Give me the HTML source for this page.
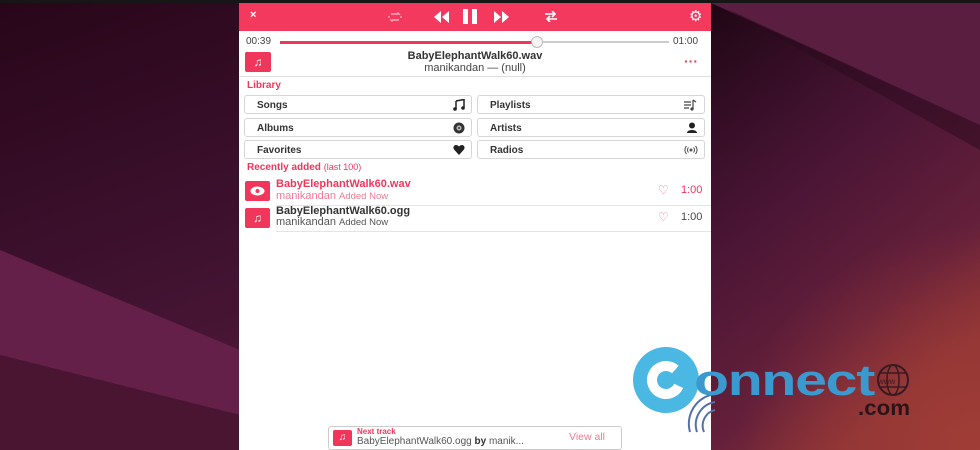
<!DOCTYPE html>
<html><head><meta charset="utf-8"><style>
*{margin:0;padding:0;box-sizing:border-box}
body{width:980px;height:450px;overflow:hidden;position:relative;font-family:"Liberation Sans",sans-serif;background:#3a1028}
.abs{position:absolute}
.bg{left:0;top:0;width:980px;height:450px;background:linear-gradient(160deg,#280619 0%,#3f1230 40%,#551a3a 70%,#5a1c3c 100%)}
.btn{position:absolute;height:19px;border:1px solid #d6d6d6;border-radius:3px;background:#fff;font-size:10px;font-weight:bold;color:#333;padding:4px 0 0 12px}
.btn svg{position:absolute;right:6px;top:3px}
.red{color:#f0365a}
</style></head><body>
<div class="abs bg"></div>
<svg class="abs" style="left:0;top:0" width="980" height="450">
<defs>
<linearGradient id="rg" x1="0" y1="0" x2="0.5" y2="1"><stop offset="0" stop-color="#1e0614"/><stop offset="0.45" stop-color="#4a1535"/><stop offset="0.8" stop-color="#65203a"/><stop offset="1" stop-color="#8a3236"/></linearGradient>
<radialGradient id="rr" cx="1" cy="1" r="0.9"><stop offset="0" stop-color="#a33e36" stop-opacity="0.9"/><stop offset="1" stop-color="#a33e36" stop-opacity="0"/></radialGradient>
</defs>
<polygon points="0,250 240,350 240,415 0,355" fill="#65204a"/>
<polygon points="0,355 240,415 240,450 0,450" fill="#4a1530"/>
<polygon points="711,0 980,0 980,450 711,450" fill="url(#rg)"/>
<rect x="711" y="200" width="269" height="250" fill="url(#rr)"/>
<polygon points="711,3 980,3 980,125" fill="#5a1f40"/>
<polygon points="725,8 980,125 980,150" fill="#2a0a1c" opacity="0.5"/>
<rect x="0" y="0" width="980" height="3" fill="#161616"/>
</svg>

<div class="abs" style="left:239px;top:3px;width:472px;height:447px;background:#fff">
 <div class="abs" style="left:0;top:0;width:472px;height:28px;background:#f33a5e;color:#fff">
  <div class="abs" style="left:11px;top:6px;font-size:11px;font-weight:bold">×</div>
  <svg class="abs" style="left:149px;top:9px" width="14" height="10"><path d="M3 2h8l-1.5-1.5M11 8H3l1.5 1.5M1 4v2M13 4v2" stroke="#f8a8b8" stroke-width="1.4" fill="none"/></svg>
  <svg class="abs" style="left:194px;top:8px" width="16" height="12"><path d="M8 0v12L1 6zM16 0v12L9 6z" fill="#fff"/></svg>
  <svg class="abs" style="left:224px;top:6px" width="16" height="16"><rect x="0" y="0" width="5" height="15" fill="#fff"/><rect x="9" y="0" width="5" height="15" fill="#fff"/></svg>
  <svg class="abs" style="left:255px;top:8px" width="16" height="12"><path d="M0 0v12l7-6zM8 0v12l7-6z" fill="#fff"/></svg>
  <svg class="abs" style="left:306px;top:8px" width="12" height="11"><path d="M0 3h10M7 0l3 3-3 3M12 8H2M5 5l-3 3 3 3" stroke="#fff" stroke-width="1.6" fill="none"/></svg>
  <div class="abs" style="left:450px;top:4px;font-size:15px">⚙</div>
 </div>
 <div class="abs" style="left:7px;top:33px;font-size:10px;color:#444">00:39</div>
 <div class="abs" style="left:41px;top:38px;width:389px;height:2px;background:#ccc"></div>
 <div class="abs" style="left:41px;top:38px;width:257px;height:3px;background:#f0365a"></div>
 <div class="abs" style="left:292px;top:33px;width:12px;height:12px;border-radius:50%;background:#f4f4f4;border:1px solid #bbb"></div>
 <div class="abs" style="left:434px;top:33px;font-size:10px;color:#444">01:00</div>
 <div class="abs" style="left:6px;top:49px;width:26px;height:20px;background:#f0365a;border-radius:2px;color:#fff;font-size:12px;text-align:center;line-height:20px">♫</div>
 <div class="abs" style="left:0;top:47px;width:472px;text-align:center;font-size:11px;font-weight:bold;color:#333">BabyElephantWalk60.wav</div>
 <div class="abs" style="left:0;top:59px;width:472px;text-align:center;font-size:11px;color:#444">manikandan — (null)</div>
 <div class="abs red" style="left:445px;top:50px;font-size:14px;font-weight:bold">···</div>
 <div class="abs" style="left:0;top:73px;width:472px;height:1px;background:#e0e0e0"></div>
 <div class="abs red" style="left:8px;top:77px;font-size:10px;font-weight:bold">Library</div>
</div>
<div class="btn" style="left:244px;top:95px;width:228px">Songs<svg width="12" height="12"><path d="M3 2l8-1.5v8M3 2v8" stroke="#222" stroke-width="1.5" fill="none"/><circle cx="2" cy="10" r="1.8" fill="#222"/><circle cx="10" cy="9" r="1.8" fill="#222"/></svg></div>
<div class="btn" style="left:477px;top:95px;width:228px">Playlists<svg width="14" height="12"><path d="M0 3h7M0 6h7M0 9h5M9 1v9M9 1l3 2" stroke="#444" stroke-width="1.2" fill="none"/><circle cx="8" cy="10" r="1.6" fill="#444"/></svg></div>
<div class="btn" style="left:244px;top:118px;width:228px">Albums<svg width="12" height="12"><circle cx="6" cy="6" r="5.5" fill="#333"/><circle cx="6" cy="6" r="2.5" fill="#bbb"/><circle cx="6" cy="6" r="1" fill="#333"/></svg></div>
<div class="btn" style="left:477px;top:118px;width:228px">Artists<svg width="12" height="12"><circle cx="6" cy="3.5" r="3" fill="#222"/><path d="M1 11c0-4 10-4 10 0z" fill="#222"/></svg></div>
<div class="btn" style="left:244px;top:140px;width:228px">Favorites<svg width="12" height="12"><path d="M6 11L1 5.5C-1 2 3-1 6 2.5 9-1 13 2 11 5.5z" fill="#222"/></svg></div>
<div class="btn" style="left:477px;top:140px;width:228px">Radios<svg width="14" height="12"><circle cx="7" cy="6" r="1.5" fill="#555"/><path d="M4.5 3.5a3.5 3.5 0 000 5M9.5 3.5a3.5 3.5 0 010 5M2.5 2a6 6 0 000 8M11.5 2a6 6 0 010 8" stroke="#555" stroke-width="1" fill="none"/></svg></div>
<div class="abs red" style="left:247px;top:162px;font-size:10px;font-weight:bold">Recently added <span style="font-weight:normal;font-size:9px">(last 100)</span></div>
<div class="abs" style="left:245px;top:181px;width:25px;height:20px;background:#f0365a;border-radius:2px"><svg width="25" height="20"><ellipse cx="12.5" cy="10" rx="7" ry="4.5" fill="#fff"/><circle cx="12.5" cy="10" r="2" fill="#f0365a"/></svg></div>
<div class="abs red" style="left:276px;top:178px;font-size:11px;font-weight:bold">BabyElephantWalk60.wav</div>
<div class="abs" style="left:276px;top:190px;font-size:11px;color:#f37a92">manikandan <span style="font-size:9.5px">Added Now</span></div>
<div class="abs" style="left:658px;top:183px;font-size:12px;color:#f37a92">♡</div>
<div class="abs red" style="left:681px;top:184px;font-size:11px">1:00</div>
<div class="abs" style="left:276px;top:205px;width:435px;height:1px;background:#e4e4e4"></div>
<div class="abs" style="left:245px;top:208px;width:25px;height:20px;background:#f0365a;border-radius:2px;color:#fff;font-size:12px;text-align:center;line-height:20px">♫</div>
<div class="abs" style="left:276px;top:205px;font-size:11px;font-weight:bold;color:#333">BabyElephantWalk60.ogg</div>
<div class="abs" style="left:276px;top:216px;font-size:11px;color:#555">manikandan <span style="font-size:9.5px">Added Now</span></div>
<div class="abs" style="left:658px;top:210px;font-size:12px;color:#f37a92">♡</div>
<div class="abs" style="left:681px;top:211px;font-size:11px;color:#444">1:00</div>
<div class="abs" style="left:276px;top:231px;width:435px;height:1px;background:#e4e4e4"></div>

<div class="abs" style="left:328px;top:426px;width:294px;height:24px;border:1px solid #ccc;border-radius:3px;background:#fff">
 <div class="abs" style="left:4px;top:3px;width:19px;height:16px;background:#f0365a;border-radius:2px;color:#fff;font-size:10px;text-align:center;line-height:16px">♫</div>
 <div class="abs red" style="left:28px;top:0px;font-size:8px;font-weight:bold">Next track</div>
 <div class="abs" style="left:28px;top:9px;font-size:10px;color:#555;white-space:nowrap">BabyElephantWalk60.ogg <b style="color:#333">by</b> manik...</div>
 <div class="abs" style="left:240px;top:4px;font-size:10.5px;color:#f37a92">View all</div>
</div>

<svg class="abs" style="left:620px;top:340px" width="300" height="100">
 <circle cx="46" cy="40" r="33" fill="#4bb8e4"/>
 <circle cx="46" cy="40" r="14" fill="none" stroke="#fff" stroke-width="10" stroke-dasharray="70 18" transform="rotate(25 46 40)"/>
 <path d="M70 92a30 30 0 0 1 25-38M77 92a23 23 0 0 1 18-30M84 92a16 16 0 0 1 11-22" stroke="#5570a8" stroke-width="2" fill="none"/>
 <text x="74" y="55" font-family="Liberation Sans,sans-serif" font-weight="bold" font-size="44" fill="#3a9ad0" letter-spacing="-1" textLength="180" lengthAdjust="spacingAndGlyphs">onnect</text>
 <circle cx="273" cy="40" r="15" fill="none" stroke="#3a1a20" stroke-width="2"/>
 <ellipse cx="273" cy="40" rx="6" ry="15" fill="none" stroke="#3a1a20" stroke-width="1.5"/>
 <path d="M259 33h28M259 47h28" stroke="#3a1a20" stroke-width="1.5"/>
 <text x="258" y="44" font-family="Liberation Sans,sans-serif" font-size="8" fill="#3a1a20">www</text>
 <text x="238" y="75" font-family="Liberation Sans,sans-serif" font-weight="bold" font-size="21" fill="#2a1418" textLength="52" lengthAdjust="spacingAndGlyphs">.com</text>
</svg>
</body></html>
